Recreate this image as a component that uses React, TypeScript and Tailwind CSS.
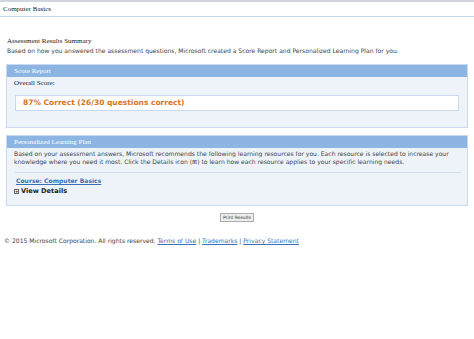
import React from 'react';

const serif = "font-['Liberation_Serif',serif]";
const verdana = "font-['DejaVu_Sans',Verdana,sans-serif]";

function Panel({ title, children }: { title: string; children: React.ReactNode }) {
  return (
    <div className="mx-[6px] border border-[#c9daf0] bg-[#eef3fa]">
      <div className={`h-[12px] bg-[#8db5e4] px-[7px] text-[7px] leading-[12px] text-white ${serif}`}>
        {title}
      </div>
      {children}
    </div>
  );
}

export default function App() {
  return (
    <div className="h-[339px] w-[474px] overflow-hidden bg-white text-[#333]">
      <div className="h-[2px] bg-[#cfd6e0]" />
      <div className={`h-[15px] border-b border-[#c8d8ea] px-[3px] text-[7px] leading-[14px] text-[#222] ${serif}`}>
        Computer Basics
      </div>

      <div className={`mt-[19px] px-[7px] text-[7px] leading-[10px] text-[#222] ${serif}`}>
        Assessment Results Summary
      </div>
      <div className={`px-[7px] text-[6.05px] leading-[10px] text-[#444] ${verdana}`}>
        Based on how you answered the assessment questions, Microsoft created a Score Report and Personalized Learning Plan for you.
      </div>

      <div className="mt-[8px]">
        <Panel title="Score Report">
          <div className={`px-[7px] pt-[1px] text-[7px] leading-[10px] text-[#222] ${serif}`}>Overall Score:</div>
          <div
            className={`mx-[8px] mt-[7px] h-[16px] border border-[#c9daf0] bg-white px-[7px] text-[7.5px] font-bold leading-[14px] text-[#d9741c] ${verdana}`}
          >
            87% Correct (26/30 questions correct)
          </div>
          <div className="h-[16px]" />
        </Panel>
      </div>

      <div className="mt-[7px]">
        <Panel title="Personalized Learning Plan">
          <div className={`px-[7px] pt-[2px] text-[6.05px] leading-[7.5px] text-[#444] ${verdana}`}>
            Based on your assessment answers, Microsoft recommends the following learning resources for you. Each resource is selected to increase your knowledge where you need it most. Click the Details icon (⊞) to learn how each resource applies to your specific learning needs.
          </div>
          <div className="ml-[8px] mr-[6px] mt-[7px] mb-[3px] border-t border-[#d3dde9]" />
          <div className={`px-[9px] text-[6.05px] font-bold leading-[10px] text-[#3b6fb6] underline ${verdana}`}>
            Course: Computer Basics
          </div>
          <div className={`flex items-center gap-[2px] px-[7px] text-[6.6px] font-bold leading-[10px] text-[#222] ${verdana}`}>
            <span className="inline-block h-[5px] w-[5px] border border-[#666] text-center text-[4px] leading-[3px]">+</span>
            View Details
          </div>
          <div className="h-[9px]" />
        </Panel>
      </div>

      <div className="mt-[7px] flex justify-center">
        <div className={`h-[9px] border border-[#aaa] bg-[#eee] px-[2px] text-[4.5px] leading-[7px] text-[#333] ${verdana}`}>
          Print Results
        </div>
      </div>

      <div className={`mt-[14px] px-[4px] text-[6.05px] leading-[10px] text-[#444] ${verdana}`}>
        © 2015 Microsoft Corporation. All rights reserved.{' '}
        <span className="text-[#3b6fb6] underline">Terms of Use</span> |{' '}
        <span className="text-[#3b6fb6] underline">Trademarks</span> |{' '}
        <span className="text-[#3b6fb6] underline">Privacy Statement</span>
      </div>
    </div>
  );
}
